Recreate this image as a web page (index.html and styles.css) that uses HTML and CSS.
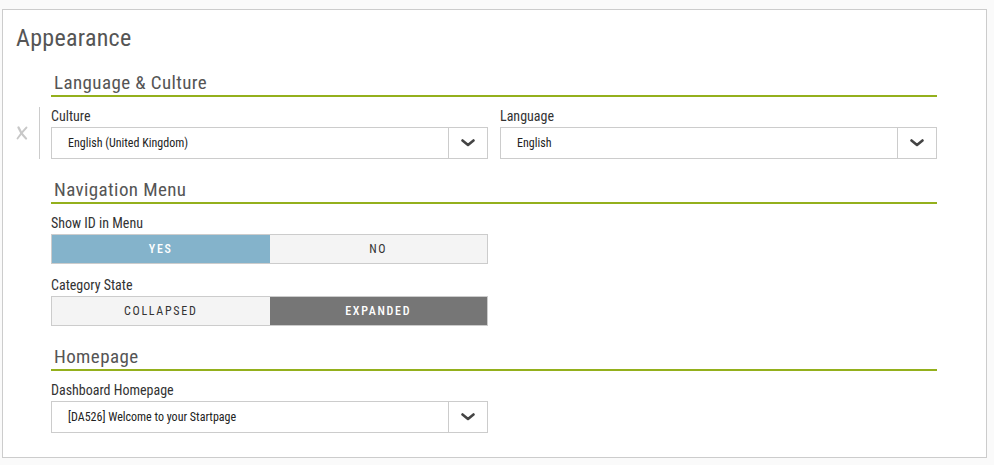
FILE: index.html
```html
<!DOCTYPE html>
<html>
<head>
<meta charset="utf-8">
<link rel="stylesheet" href="styles.css">
</head>
<body>
<div class="card">
  <h1 class="title">Appearance</h1>
  <div class="body">
    <div class="gutter">
      <div class="remove"><svg class="x" width="12" height="14" viewBox="0 0 12 14"><path d="M2.5 1.5 Q5 8 10 12.5" fill="none" stroke="#c8c8c8" stroke-width="2.2" stroke-linecap="round"/><path d="M10.5 1.5 Q6 6 1.5 12.5" fill="none" stroke="#c8c8c8" stroke-width="1.8" stroke-linecap="round"/></svg></div>
    </div>
    <div class="sections">
      <div class="section">
        <h2 class="section-head">Language &amp; Culture</h2>
        <div class="cols">
          <div class="field">
            <label class="label">Culture</label>
            <div class="select">
              <span class="value">English (United Kingdom)</span>
              <span class="arrow"><svg width="14" height="8" viewBox="0 0 14 8"><polyline points="1.5,1.5 7,6 12.5,1.5" fill="none" stroke="#444" stroke-width="2.6" stroke-linecap="round" stroke-linejoin="round"/></svg></span>
            </div>
          </div>
          <div class="field">
            <label class="label">Language</label>
            <div class="select">
              <span class="value">English</span>
              <span class="arrow"><svg width="14" height="8" viewBox="0 0 14 8"><polyline points="1.5,1.5 7,6 12.5,1.5" fill="none" stroke="#444" stroke-width="2.6" stroke-linecap="round" stroke-linejoin="round"/></svg></span>
            </div>
          </div>
        </div>
      </div>
      <div class="section">
        <h2 class="section-head">Navigation Menu</h2>
        <div class="cols">
          <div class="field">
            <label class="label">Show ID in Menu</label>
            <div class="toggle">
              <span class="opt on-blue">YES</span>
              <span class="opt">NO</span>
            </div>
            <label class="label label-2">Category State</label>
            <div class="toggle">
              <span class="opt">COLLAPSED</span>
              <span class="opt on-gray">EXPANDED</span>
            </div>
          </div>
        </div>
      </div>
      <div class="section">
        <h2 class="section-head">Homepage</h2>
        <div class="cols">
          <div class="field">
            <label class="label">Dashboard Homepage</label>
            <div class="select">
              <span class="value">[DA526] Welcome to your Startpage</span>
              <span class="arrow"><svg width="14" height="8" viewBox="0 0 14 8"><polyline points="1.5,1.5 7,6 12.5,1.5" fill="none" stroke="#444" stroke-width="2.6" stroke-linecap="round" stroke-linejoin="round"/></svg></span>
            </div>
          </div>
          <div class="field"></div>
        </div>
      </div>
    </div>
  </div>
</div>
</body>
</html>
```
FILE: styles.css
```css
* { box-sizing: border-box; }
html, body { margin: 0; padding: 0; }
body {
  background: #fafafa;
  font-family: "Roboto Condensed", Roboto, "Liberation Sans", sans-serif;
  color: #333;
}
.card {
  margin: 9px 0 0 2px;
  width: 985px;
  height: 449px;
  background: #fff;
  border: 1px solid #cccccc;
  padding: 14px 0 0 13px;
}
.title {
  margin: 0;
  font-size: 24px;
  line-height: 28px;
  font-weight: 400;
  color: #555;
  letter-spacing: 0.3px;
}
.body {
  display: flex;
  margin-top: 20px;
}
.gutter {
  width: 35px;
  padding-top: 35px;
}
.remove {
  width: 24px;
  height: 52px;
  border-right: 1px solid #cccccc;
  display: flex;
  align-items: center;
  justify-content: flex-start;
}
.x {
  display: block;
}
.sections {
  width: 886px;
}
.section { margin-bottom: 20px; }
.section-head {
  margin: 0;
  font-size: 19px;
  line-height: 22px;
  font-weight: 400;
  color: #555;
  padding: 0 0 1px 3px;
  border-bottom: 2px solid #94b01c;
  letter-spacing: 0.4px;
}
.cols {
  display: grid;
  grid-template-columns: 437px 437px;
  column-gap: 12px;
  padding-top: 11px;
}
.label {
  display: block;
  font-size: 14px;
  line-height: 17px;
  color: #333;
  margin-bottom: 2px;
}
.label-2 { margin-top: 13px; }
.select {
  display: flex;
  height: 32px;
  border: 1px solid #cccccc;
  background: #fff;
}
.value {
  flex: 1;
  display: flex;
  align-items: center;
  padding-left: 16px;
  font-size: 12px;
  color: #222;
}
.arrow {
  width: 39px;
  border-left: 1px solid #cccccc;
  display: flex;
  align-items: center;
  justify-content: center;
}
.toggle {
  display: grid;
  grid-template-columns: 1fr 1fr;
  height: 30px;
  border: 1px solid #cccccc;
  background: #f4f4f4;
}
.opt {
  display: flex;
  align-items: center;
  justify-content: center;
  font-size: 12px;
  font-weight: 400;
  letter-spacing: 1.7px;
  color: #333;
}
.on-blue { background: #84b3cb; color: #fff; font-weight: 500; }
.on-gray { background: #767676; color: #fff; font-weight: 500; }
```
